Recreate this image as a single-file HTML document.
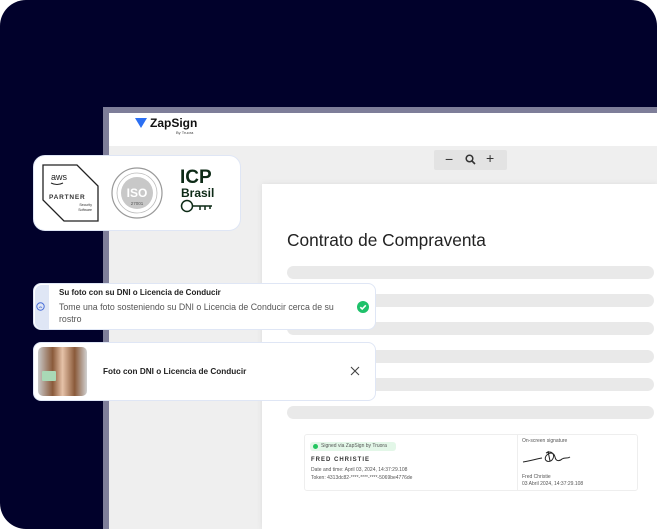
<!DOCTYPE html>
<html><head><style>
*{margin:0;padding:0;box-sizing:border-box}
body{width:657px;height:529px;background:#fff;position:relative;overflow:hidden;font-family:"Liberation Sans",sans-serif}
.bg{position:absolute;left:0;top:0;width:657px;height:529px;background:#01012b;border-radius:26px}
.frame{position:absolute;left:103px;top:107px;width:554px;height:422px;background:#7e7e99}
.screen{position:absolute;left:109px;top:113px;width:548px;height:416px;background:#efefef}
.hdr{position:absolute;left:0;top:0;width:548px;height:33px;background:#fff}
.doc{position:absolute;left:262px;top:184px;width:395px;height:345px;background:#fff;box-shadow:0 0 6px rgba(0,0,0,.08)}
.line{position:absolute;left:287px;width:367px;height:13px;border-radius:7px;background:#e9e9e9}
.card{position:absolute;background:#fff;border:1.5px solid #dfe6f5;border-radius:8px}
.t{position:absolute;white-space:nowrap}
</style></head><body>
<div class="bg"></div>
<div class="frame"></div>
<div class="screen">
 <div class="hdr">
  <svg style="position:absolute;left:26px;top:5px" width="12" height="10"><path d="M0 0H12L6 10Z" fill="#2b6ff3"/></svg>
  <div class="t" style="left:41px;top:3px;font-size:12px;font-weight:bold;color:#111">ZapSign</div>
  <div class="t" style="left:67px;top:17px;font-size:4px;color:#444">By Truora</div>
 </div>
 <div style="position:absolute;left:325px;top:37px;width:73px;height:20px;background:#e3e3e3;border-radius:2px"></div>
 <div class="t" style="left:336px;top:38px;font-size:14px;color:#333">−</div>
 <svg style="position:absolute;left:356px;top:41px" width="11" height="11"><circle cx="4.5" cy="4.5" r="3.3" stroke="#333" stroke-width="1.5" fill="none"/><path d="M7 7L10 10" stroke="#333" stroke-width="1.6"/></svg>
 <div class="t" style="left:377px;top:37px;font-size:14px;color:#333">+</div>
</div>
<div class="doc"></div>
<div class="t" style="left:287px;top:230px;font-size:17.3px;color:#222">Contrato de Compraventa</div>
<div class="line" style="top:266px"></div>
<div class="line" style="top:294px"></div>
<div class="line" style="top:322px"></div>
<div class="line" style="top:350px"></div>
<div class="line" style="top:378px"></div>
<div class="line" style="top:406px"></div>
<div style="position:absolute;left:304px;top:434px;width:334px;height:57px;border:1px solid #eee;border-radius:3px;background:#fff"></div>
<div style="position:absolute;left:517px;top:434px;width:1px;height:57px;background:#eee"></div>
<div style="position:absolute;left:310px;top:442px;width:86px;height:9px;background:#e3f7e8;border-radius:3px"></div>
<div style="position:absolute;left:313px;top:444px;width:5px;height:5px;border-radius:50%;background:#22c55e"></div>
<div class="t" style="left:321px;top:443px;font-size:5px;color:#555">Signed via ZapSign by Truora</div>
<div class="t" style="left:311px;top:457px;font-size:6px;font-weight:bold;letter-spacing:1px;color:#333">FRED CHRISTIE</div>
<div class="t" style="left:311px;top:467px;font-size:5px;color:#555">Date and time: April 03, 2024, 14:37:29.108</div>
<div class="t" style="left:311px;top:475px;font-size:5px;color:#555">Token: 4313dc82-****-****-****-5069be4776de</div>
<div class="t" style="left:522px;top:438px;font-size:5px;color:#555">On-screen signature</div>
<svg style="position:absolute;left:522px;top:447px" width="50" height="20"><path d="M1 15C8 14 14 12 20 11M24 6C30 3 34 8 30 13C27 16 21 14 24 9C27 5 32 5 33 10C34 15 38 14 40 12C43 10 45 12 48 10M26 4L28 14" stroke="#222" stroke-width="1" fill="none"/></svg>
<div class="t" style="left:522px;top:474px;font-size:5px;color:#555">Fred Christie</div>
<div class="t" style="left:522px;top:481px;font-size:5px;color:#555">03 Abril 2024, 14:37:29.108</div>

<div class="card" style="left:33px;top:155px;width:208px;height:76px;border-radius:12px"></div>
<svg style="position:absolute;left:42px;top:164px" width="58" height="58"><path d="M1 1H35L56 22V57H22L1 36Z" fill="#fff" stroke="#222" stroke-width="1.3"/>
<text x="9" y="16" font-size="9" font-family="Liberation Sans" fill="#222">aws</text>
<path d="M9 19Q15 22 21 19" stroke="#222" fill="none"/>
<text x="7" y="35" font-size="6.5" font-weight="bold" font-family="Liberation Sans" fill="#333" letter-spacing="0.8">PARTNER</text>
<text x="50" y="42" font-size="3.5" text-anchor="end" font-family="Liberation Sans" fill="#333">Security</text>
<text x="50" y="47" font-size="3.5" text-anchor="end" font-family="Liberation Sans" fill="#333">Software</text></svg>
<svg style="position:absolute;left:110px;top:166px" width="54" height="54"><circle cx="27" cy="27" r="25" fill="#fff" stroke="#999" stroke-width="1.2"/><circle cx="27" cy="27" r="20" fill="none" stroke="#bbb" stroke-width=".8"/><circle cx="27" cy="27" r="16" fill="#c8c8c8"/><text x="27" y="31" text-anchor="middle" font-size="12" font-weight="bold" fill="#fff" font-family="Liberation Sans">ISO</text><text x="27" y="39" text-anchor="middle" font-size="4.5" fill="#555" font-family="Liberation Sans">27001</text></svg>
<div class="t" style="left:180px;top:168px;font-size:19px;font-weight:bold;color:#0d2a16;line-height:19px">ICP</div>
<div class="t" style="left:181px;top:186px;font-size:12px;font-weight:bold;color:#0d2a16">Brasil</div>
<svg style="position:absolute;left:180px;top:199px" width="34" height="16"><circle cx="7" cy="7" r="5.5" stroke="#0d2a16" stroke-width="1.5" fill="none"/><path d="M12 7H32M20 7V11M25 7V11M30 7V10" stroke="#0d2a16" stroke-width="1.5"/></svg>

<div class="card" style="left:33px;top:283px;width:343px;height:47px"></div>
<div style="position:absolute;left:34.5px;top:284.5px;width:14px;height:44px;background:#dfe6f5;border-radius:7px 0 0 7px"></div>
<svg style="position:absolute;left:36px;top:302px" width="9" height="9"><circle cx="4.5" cy="4.5" r="3.7" stroke="#4a6fd8" fill="none"/><path d="M3 5.6Q4.5 4.3 6 5.6" stroke="#4a6fd8" fill="none" stroke-width=".8"/></svg>
<div class="t" style="left:59px;top:288px;font-size:8px;font-weight:bold;color:#222">Su foto con su DNI o Licencia de Conducir</div>
<div class="t" style="left:59px;top:302px;font-size:8.8px;color:#555">Tome una foto sosteniendo su DNI o Licencia de Conducir cerca de su</div>
<div class="t" style="left:59px;top:314px;font-size:8.8px;color:#555">rostro</div>
<div style="position:absolute;left:357px;top:301px;width:12px;height:12px;border-radius:50%;background:#1ec16a"></div>
<svg style="position:absolute;left:357px;top:301px" width="12" height="12"><path d="M3.3 6.2L5.2 8L8.8 4.3" stroke="#fff" stroke-width="1.6" fill="none"/></svg>

<div class="card" style="left:33px;top:342px;width:343px;height:59px"></div>
<div style="position:absolute;left:38px;top:347px;width:49px;height:49px;border-radius:5px;background:linear-gradient(90deg,#c9c9c9 0%,#8a5a3a 30%,#e6c2a8 50%,#8a5a3a 75%,#d0d0d0 100%)"></div>
<div style="position:absolute;left:42px;top:371px;width:14px;height:10px;background:#a9d9b6;border-radius:1px"></div>
<div class="t" style="left:103px;top:367px;font-size:8.2px;font-weight:bold;color:#222">Foto con DNI o Licencia de Conducir</div>
<svg style="position:absolute;left:350px;top:366px" width="10" height="10"><path d="M1 1L9 9M9 1L1 9" stroke="#444" stroke-width="1.1"/></svg>
</body></html>
